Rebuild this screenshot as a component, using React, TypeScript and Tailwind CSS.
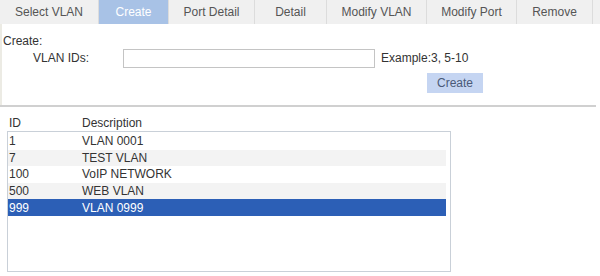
import React from 'react';

const tabs = [
    { label: 'Select VLAN', w: 99 },
    { label: 'Create', w: 70 },
    { label: 'Port Detail', w: 86 },
    { label: 'Detail', w: 72 },
    { label: 'Modify VLAN', w: 100 },
    { label: 'Modify Port', w: 90 },
    { label: 'Remove', w: 76 },
];

const vlans = [
    { id: '1', desc: 'VLAN 0001' },
    { id: '7', desc: 'TEST VLAN' },
    { id: '100', desc: 'VoIP NETWORK' },
    { id: '500', desc: 'WEB VLAN' },
    { id: '999', desc: 'VLAN 0999' },
];

export default function App() {
    return (
        <div className="w-[600px] h-[276px] bg-white overflow-hidden text-[12px] text-[#333]" style={{ fontFamily: '"Liberation Sans", Arial, sans-serif' }}>
            {/* Tabs */}
            <div className="flex h-[24px] bg-[#f0f0f0]">
                {tabs.map((t) => (
                    <div
                        key={t.label}
                        style={{ width: t.w }}
                        className={`flex items-center justify-center border-r border-[#dcdcdc] ${t.label === 'Create' ? 'bg-[#a8c2e6] text-white' : 'text-[#555]'}`}
                    >
                        {t.label}
                    </div>
                ))}
                <div className="flex-1" />
            </div>

            {/* Create form */}
            <div className="h-[81px] border-l-2 border-[#ecebe4] pl-[1px] pt-[10px]">
                <div className="leading-[14px]">Create:</div>
                <div className="flex items-center mt-[1px] h-[18px]">
                    <span className="w-[120px] pl-[30px]">VLAN IDs:</span>
                    <input className="w-[252px] h-[19px] border border-[#c4c4c4] bg-white" />
                    <span className="ml-[6px]">Example:3, 5-10</span>
                </div>
                <div className="flex mt-[6px] pl-[424px]">
                    <button className="w-[56px] h-[20px] bg-[#c5d5f2] text-[#4a5a78]">Create</button>
                </div>
            </div>
            <div className="h-[2px] bg-[#d0d0d0] mr-[4px]" />

            {/* VLAN list */}
            <div className="pl-[9px] pt-[9px] flex h-[14px] box-content leading-[14px]">
                <span className="w-[73px]">ID</span>
                <span>Description</span>
            </div>
            <div className="ml-[7px] mt-[1px] w-[444px] h-[141px] border border-[#c9d0d8] pt-[1px]">
                {vlans.map((v, i) => (
                    <div
                        key={v.id}
                        className={`flex items-center h-[16.6px] pl-[1px] mr-[4px] ${i === 4 ? 'bg-[#2c5fb6] text-white' : i % 2 === 1 ? 'bg-[#f3f3f3]' : ''}`}
                    >
                        <span className="w-[73px]">{v.id}</span>
                        <span>{v.desc}</span>
                    </div>
                ))}
            </div>
        </div>
    );
}
